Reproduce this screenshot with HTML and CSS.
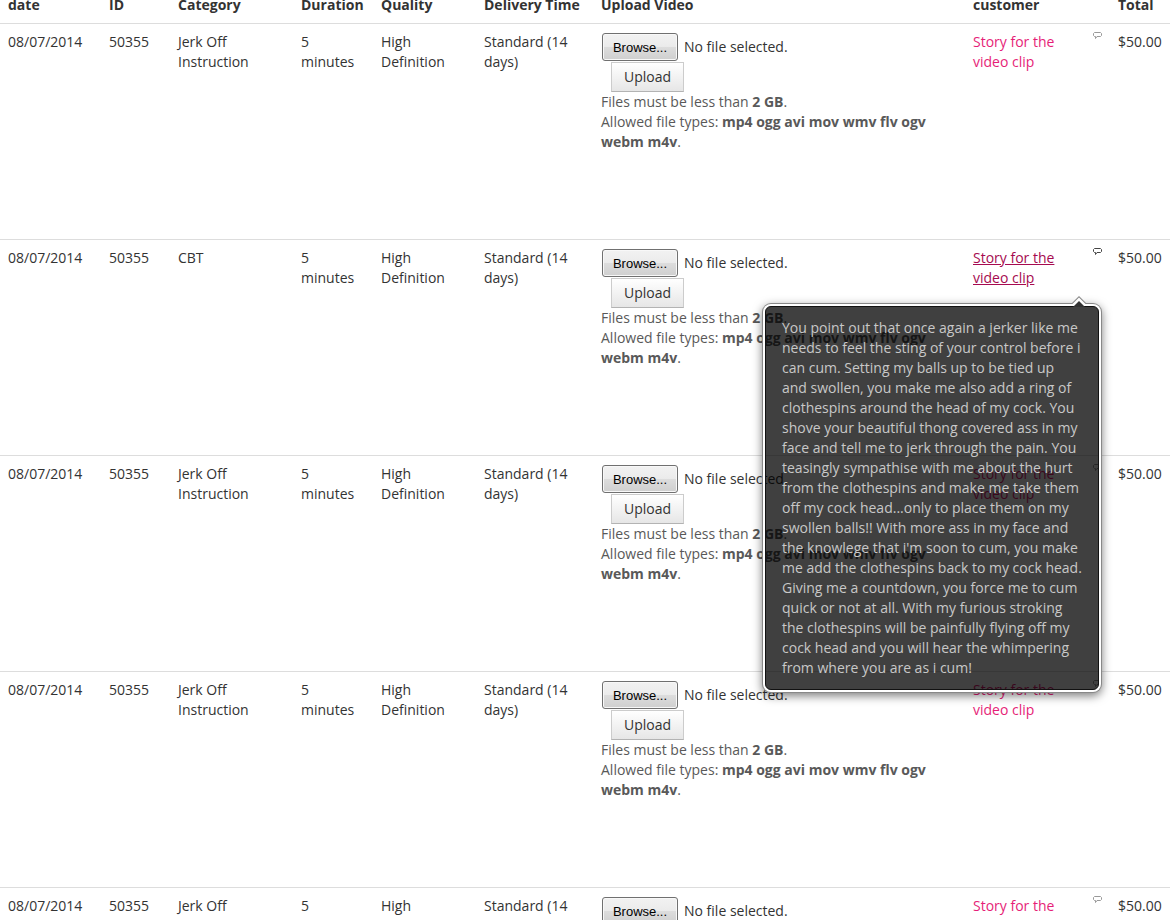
FILE: index.html
```html
<!DOCTYPE html>
<html lang="en">
<head>
  <meta charset="UTF-8" />
  <title>Custom video orders</title>
  <link rel="stylesheet" href="styles.css">
</head>

<body>
  <table class="orders">
    <colgroup>
      <col class="col-date" />
      <col class="col-id" />
      <col class="col-category" />
      <col class="col-duration" />
      <col class="col-quality" />
      <col class="col-delivery" />
      <col />
      <col class="col-customer" />
      <col class="col-total" />
    </colgroup>
    <thead>
      <tr>
        <th>date</th>
        <th>ID</th>
        <th>Category</th>
        <th>Duration</th>
        <th>Quality</th>
        <th>Delivery Time</th>
        <th>Upload Video</th>
        <th>customer</th>
        <th>Total</th>
      </tr>
    </thead>
    <tbody id="rows"></tbody>
  </table>

  <template id="rowTemplate">
    <tr>
      <td>08/07/2014</td>
      <td>50355</td>
      <td class="category">Jerk Off Instruction</td>
      <td>5 minutes</td>
      <td>High Definition</td>
      <td>Standard (14 days)</td>
      <td>
        <form class="upload">
          <div class="file-row">
            <button type="button" class="browse">Browse...</button>
            <input type="file" class="file-input" />
            <label class="file-name">No file selected.</label>
          </div>
          <button type="submit" class="submit">Upload</button>
          <div class="help">
            Files must be less than <strong>2 GB</strong>.<br />
            Allowed file types: <strong>mp4 ogg avi mov wmv flv ogv webm m4v</strong>.
          </div>
        </form>
      </td>
      <td>
        <div class="story">
          <a href="#">Story for the video clip</a>
          <svg class="bubble" width="9" height="8" viewBox="0 0 9 8" aria-hidden="true">
            <path d="M1.500 .5h6l1 1v2l-1 1H4L2.500 6.500v-2h-1l-1-1v-2z" />
          </svg>
        </div>
      </td>
      <td>$50.00</td>
    </tr>
  </template>

  <template id="tipTemplate">
    <div class="tip" role="tooltip">
      <svg class="tip-arrow" width="20" height="11" viewBox="0 0 20 11" aria-hidden="true">
        <path class="arrow-edge" d="M2 8L10 0l8 8z" />
        <path class="arrow-ring" d="M3.500 8L10 1.500 16.500 8v2h-13z" />
        <path class="arrow-fill" d="M4 11l6-6 6 6z" />
      </svg>
      You point out that once again a jerker like me needs to feel the sting of your control before i can cum. Setting my balls up to be tied up and swollen, you make me also add a ring of clothespins around the head of my cock. You shove your beautiful thong covered ass in my face and tell me to jerk through the pain. You teasingly sympathise with me about the hurt from the clothespins and make me take them off my cock head...only to place them on my swollen balls!! With more ass in my face and the knowlege that i'm soon to cum, you make me add the clothespins back to my cock head. Giving me a countdown, you force me to cum quick or not at all. With my furious stroking the clothespins will be painfully flying off my cock head and you will hear the whimpering from where you are as i cum!
    </div>
  </template>

  <script src="script.js"></script>
</body>
</html>
```
FILE: styles.css
```css
/* --- Global --- */
* { box-sizing: border-box; }
body {
  margin: -13px 0 0;
  font-family: 'Open Sans', sans-serif;
  font-size: 14px;
  line-height: 20px;
  color: #333;
  background: #fff;
}

/* --- Orders table --- */
.orders {
  width: 100%;
  table-layout: fixed;
  border-collapse: separate;
  border-spacing: 0;
}
.orders th,
.orders td {
  padding: 8px;
  text-align: left;
  vertical-align: top;
}
.orders th { font-weight: 700; }
.orders td {
  height: 216px;
  border-top: 1px solid #ddd;
}
.col-date { width: 101px; }
.col-id { width: 69px; }
.col-category { width: 123px; }
.col-duration { width: 80px; }
.col-quality { width: 103px; }
.col-delivery { width: 117px; }
.col-customer { width: 145px; }
.col-total { width: 60px; }

/* --- Upload form --- */
.upload { margin: 0; }
.file-row {
  display: flex;
  align-items: center;
  height: 30px;
  padding-left: 1px;
}
.browse {
  width: 76px;
  height: 28px;
  padding: 0;
  font: 13px 'Liberation Sans', sans-serif;
  color: #000;
  border: 1px solid #707070;
  border-radius: 3px;
  background: linear-gradient(#f2f2f2, #ebebeb 48%, #ddd 50%, #cfcfcf);
  box-shadow: inset 0 0 0 1px #f8f8f8;
}
.file-input { display: none; }
.file-name { margin-left: 6px; }
.submit {
  display: block;
  width: 73px;
  height: 30px;
  margin-left: 10px;
  padding: 0;
  font: inherit;
  color: #333;
  border: 1px solid #ccc;
  border-bottom-color: #b3b3b3;
  background: linear-gradient(#fff, #e6e6e6);
}
.help { color: #595959; }

/* --- Story link --- */
.story {
  position: relative;
  padding-right: 32px;
}
.story a {
  color: #e61e78;
  text-decoration: none;
}
.bubble {
  position: absolute;
  top: 0;
  right: 0;
  fill: #fff;
  stroke: #999;
}
.story.open a {
  color: #a60a50;
  text-decoration: underline;
}
.story.open .bubble { stroke: #444; }

/* --- Tooltip --- */
.tip {
  position: absolute;
  z-index: 1;
  top: 58px;
  right: 3px;
  width: 334px;
  padding: 11px 16px;
  color: #c8c8c8;
  background: rgba(0,0,0,0.75);
  border: 1px solid #111;
  border-radius: 6px;
  box-shadow: 0 0 0 2px #fff, 0 0 0 3px #888, 0 3px 10px 3px rgba(0,0,0,0.5);
}
.tip-arrow {
  position: absolute;
  top: -11px;
  right: 9px;
}
.arrow-edge { fill: #888; }
.arrow-ring { fill: #fff; }
.arrow-fill { fill: #333; }
```
FILE: script.js
```js
const categories = [
  'Jerk Off Instruction',
  'CBT',
  'Jerk Off Instruction',
  'Jerk Off Instruction',
  'Jerk Off Instruction'
];
const openRow = 1;

const rows = document.getElementById('rows');
const rowTemplate = document.getElementById('rowTemplate');
const tipTemplate = document.getElementById('tipTemplate');

categories.forEach((category, i) => {
  const row = rowTemplate.content.cloneNode(true);
  row.querySelector('.category').textContent = category;

  const input = row.querySelector('.file-input');
  const name = row.querySelector('.file-name');
  input.id = 'file-' + i;
  name.htmlFor = input.id;
  row.querySelector('.browse').addEventListener('click', () => input.click());
  input.addEventListener('change', () => {
    name.textContent = input.files.length ? input.files[0].name : 'No file selected.';
  });

  if (i === openRow) {
    const story = row.querySelector('.story');
    story.classList.add('open');
    story.appendChild(tipTemplate.content.cloneNode(true));
  }
  rows.appendChild(row);
});
```
